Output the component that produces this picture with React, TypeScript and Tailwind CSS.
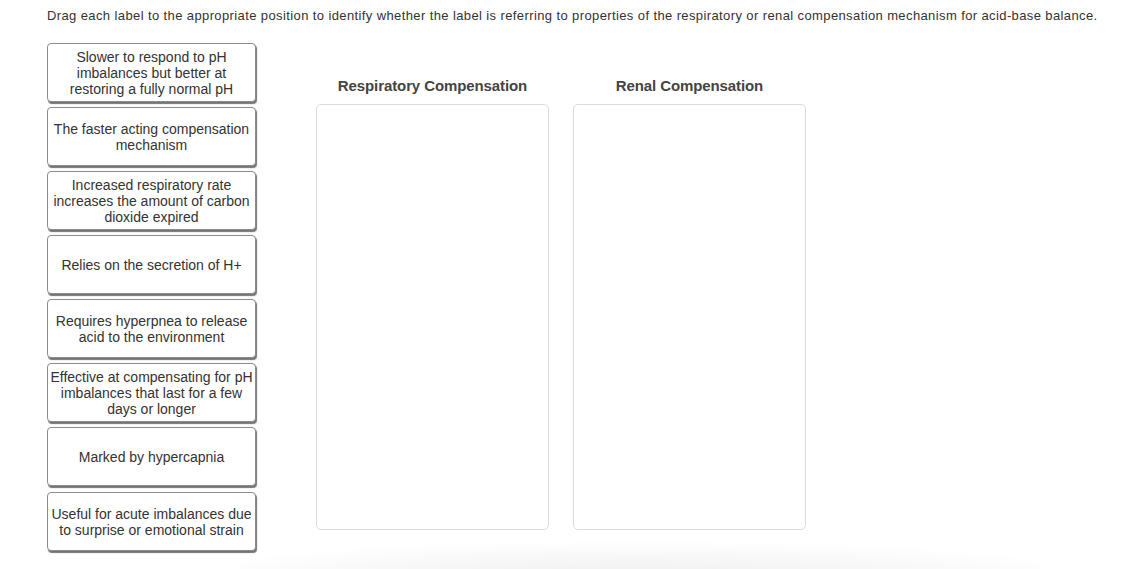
import React from 'react';

const labels: string[][] = [
  ['Slower to respond to pH', 'imbalances but better at', 'restoring a fully normal pH'],
  ['The faster acting compensation', 'mechanism'],
  ['Increased respiratory rate', 'increases the amount of carbon', 'dioxide expired'],
  ['Relies on the secretion of H+'],
  ['Requires hyperpnea to release', 'acid to the environment'],
  ['Effective at compensating for pH', 'imbalances that last for a few', 'days or longer'],
  ['Marked by hypercapnia'],
  ['Useful for acute imbalances due', 'to surprise or emotional strain'],
];

const zones = ['Respiratory Compensation', 'Renal Compensation'];

function LabelCard({ lines }: { lines: string[] }) {
  return (
    <div className="w-[209px] h-[59px] flex flex-col items-center justify-center bg-white border border-[#8c8c8c] rounded-[4px] shadow-[1px_2px_1px_rgba(0,0,0,0.55)] text-center text-[14px] leading-4 text-[#333] px-[2px]">
      {lines.map((l) => (
        <span key={l} className="whitespace-nowrap">{l}</span>
      ))}
    </div>
  );
}

export default function App() {
  return (
    <div className="w-[1137px] h-[569px] overflow-hidden bg-white font-['Liberation_Sans',Arial,sans-serif]">
      <p className="pt-2 pl-[47px] text-[13px] leading-4 tracking-[0.39px] text-[#333] whitespace-nowrap">
        Drag each label to the appropriate position to identify whether the label is referring to properties of the respiratory or renal compensation mechanism for acid-base balance.
      </p>

      <div className="flex pl-[47px] mt-[19px]">
        <div className="flex flex-col gap-[5px]">
          {labels.map((l, i) => (
            <div key={i} className={i === labels.length - 1 ? 'mt-px' : ''}>
              <LabelCard lines={l} />
            </div>
          ))}
        </div>

        <div className="flex gap-[24px] ml-[60px] pt-[35px]">
          {zones.map((z) => (
            <div key={z} className="flex flex-col w-[233px]">
              <h3 className="text-center text-[15px] leading-4 font-bold text-[#444] tracking-[-0.1px]">{z}</h3>
              <div className="mt-[10px] h-[426px] border border-[#dcdcdc] rounded-[5px] bg-white" />
            </div>
          ))}
        </div>
      </div>

      {/* soft floor shadow under the board */}
      <div className="ml-[240px] mt-[-11px] w-[800px] h-[40px] bg-[radial-gradient(ellipse_60%_100%_at_50%_100%,#ededed,#f7f7f7_55%,rgba(255,255,255,0)_100%)]" />
    </div>
  );
}
